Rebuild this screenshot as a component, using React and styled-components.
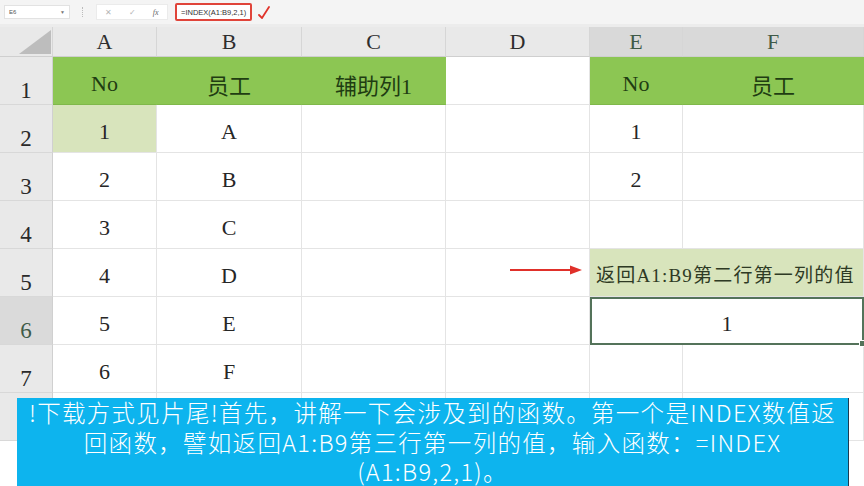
import React from "react";
import styled, { createGlobalStyle, css } from "styled-components";

const Global = createGlobalStyle`
  html, body { margin: 0; padding: 0; background: #fff; }
  #root { width: 864px; height: 486px; }
`;

const Screen = styled.div`
  position: relative;
  width: 864px;
  height: 486px;
  overflow: hidden;
  background: #fff;
  font-family: "Liberation Serif", "Noto Sans CJK SC", serif;
`;

const FormulaBar = styled.div`
  height: 24px;
  background: #f4f4f4;
  border-bottom: 3px solid #ececec;
  display: flex;
  align-items: center;
  padding: 0 4px;
  gap: 7px;
  font-family: "Liberation Sans", sans-serif;
`;

const NameBox = styled.div`
  width: 66px;
  height: 14px;
  background: #fff;
  border: 1px solid #e2e2e2;
  display: flex;
  align-items: center;
  justify-content: space-between;
  padding: 0 4px;
  box-sizing: border-box;
  font-size: 6px;
  color: #555;
`;

const Caret = styled.span`
  font-size: 5px;
  color: #777;
`;

const Dots = styled.span`
  width: 1px;
  height: 10px;
  margin: 0 5px;
  border-left: 1px dotted #bbb;
`;

const IconBox = styled.div`
  width: 72px;
  height: 16px;
  background: #fff;
  border: 1px solid #ebebeb;
  box-sizing: border-box;
  display: flex;
  align-items: center;
  justify-content: space-around;
  color: #b5b5b5;
  font-size: 8px;
`;

const Fx = styled.span`
  font-family: "Liberation Serif", serif;
  font-style: italic;
  color: #666;
  font-size: 8px;
`;

const FormulaInput = styled.div`
  height: 14px;
  padding: 0 4px;
  border: 2px solid #e0443a;
  border-radius: 2px;
  background: #fff;
  display: flex;
  align-items: center;
  font-size: 7.5px;
  color: #333;
`;

const Sheet = styled.div`
  display: grid;
  grid-template-columns: 53px 104px 145px 144px 144px 93px 181px;
  grid-template-rows: 30px repeat(8, 48px);
`;

const ColHead = styled.div`
  background: ${(p) => (p.$active ? "#d9d9d9" : "#e9e9e9")};
  border-right: 1px solid #d6d6d6;
  border-bottom: 1px solid #cfcfcf;
  display: flex;
  align-items: center;
  justify-content: center;
  font-size: 22px;
  color: ${(p) => (p.$active ? "#3e5a48" : "#2e2e2e")};
  box-sizing: border-box;
`;

const Corner = styled.div`
  background: #e9e9e9;
  border-right: 1px solid #d6d6d6;
  border-bottom: 1px solid #cfcfcf;
  position: relative;
  svg { position: absolute; right: 1px; bottom: 2px; }
`;

const RowHead = styled.div`
  background: ${(p) => (p.$active ? "#dadada" : "#e9e9e9")};
  border-right: 1px solid #d0d0d0;
  border-bottom: 1px solid #d8d8d8;
  display: flex;
  align-items: flex-end;
  justify-content: center;
  padding-bottom: 2px;
  box-sizing: border-box;
  font-size: 23px;
  line-height: 23px;
  color: ${(p) => (p.$active ? "#3e5a48" : "#2a2a2a")};
`;

const Cell = styled.div`
  box-sizing: border-box;
  border-right: 1px solid #e4e4e4;
  border-bottom: 1px solid #e4e4e4;
  display: flex;
  align-items: center;
  justify-content: ${(p) => (p.$left ? "flex-start" : "center")};
  padding-top: ${(p) => (p.$left ? "0" : "6px")};
  padding-left: ${(p) => (p.$left ? "6px" : "0")};
  font-size: 22px;
  color: #262626;
  white-space: nowrap;
  overflow: visible;
  background: ${(p) => p.$bg || "#fff"};
  ${(p) =>
    p.$span &&
    css`
      grid-column: span ${p.$span};
    `}
  ${(p) =>
    p.$bg === "#8cc653" &&
    css`
      border-right-color: #8cc653;
      border-bottom-color: #7fb84a;
      color: #1f3d12;
    `}
  ${(p) =>
    p.$selected &&
    css`
      border: 2px solid #54735a;
      position: relative;
    `}
  ${(p) =>
    p.$small &&
    css`
      font-size: 19px;
      letter-spacing: 1.2px;
      padding-top: 2px;
      color: #2e3a24;
    `}
`;

const Handle = styled.span`
  position: absolute;
  right: -4px;
  bottom: -4px;
  width: 5px;
  height: 5px;
  background: #54735a;
  border: 1px solid #fff;
`;

const Caption = styled.div`
  position: absolute;
  left: 17px;
  top: 398px;
  width: 832px;
  height: 100px;
  background: #0db4ee;
  border-right: 1px solid #1a3b52;
  box-sizing: border-box;
  color: #fff;
  font-family: "Noto Sans CJK SC", "Noto Sans", sans-serif;
  font-weight: 300;
  font-size: 23.5px;
  letter-spacing: 1.3px;
  line-height: 29.5px;
  text-align: center;
  padding: 0;
  white-space: nowrap;
`;

const Arrow = styled.svg`
  position: absolute;
  left: 508px;
  top: 263px;
`;

const Tick = styled.svg`
  margin-left: -2px;
`;

const GREEN = "#8cc653";
const PALE = "#d8e4bc";

const cols = ["A", "B", "C", "D", "E", "F"];

export default function App() {
  const data = [
    ["1", "A"],
    ["2", "B"],
    ["3", "C"],
    ["4", "D"],
    ["5", "E"],
    ["6", "F"],
    ["", ""],
  ];
  return (
    <Screen>
      <Global />
      <FormulaBar>
        <NameBox>
          E6<Caret>▼</Caret>
        </NameBox>
        <Dots />
        <IconBox>
          <span>✕</span>
          <span>✓</span>
          <Fx>fx</Fx>
        </IconBox>
        <FormulaInput>=INDEX(A1:B9,2,1)</FormulaInput>
        <Tick width="14" height="14" viewBox="0 0 14 14">
          <path d="M2 10 L5 13 L12 2" fill="none" stroke="#e0332a" strokeWidth="1.8" strokeLinecap="round" />
        </Tick>
      </FormulaBar>
      <Sheet>
        <Corner>
          <svg width="32" height="24" viewBox="0 0 32 24">
            <polygon points="32,0 32,24 0,24" fill="#bdbdbd" />
          </svg>
        </Corner>
        {cols.map((c) => (
          <ColHead key={c} $active={c === "E" || c === "F"}>
            {c}
          </ColHead>
        ))}

        <RowHead>1</RowHead>
        <Cell $bg={GREEN}>No</Cell>
        <Cell $bg={GREEN}>员工</Cell>
        <Cell $bg={GREEN}>辅助列1</Cell>
        <Cell />
        <Cell $bg={GREEN}>No</Cell>
        <Cell $bg={GREEN}>员工</Cell>

        {data.map((r, i) => {
          const row = i + 2;
          let right;
          if (row === 2 || row === 3) {
            right = (
              <>
                <Cell>{row - 1}</Cell>
                <Cell />
              </>
            );
          } else if (row === 5) {
            right = (
              <Cell $span={2} $bg={PALE} $left $small>
                返回A1:B9第二行第一列的值
              </Cell>
            );
          } else if (row === 6) {
            right = (
              <Cell $span={2} $selected>
                1<Handle />
              </Cell>
            );
          } else {
            right = (
              <>
                <Cell />
                <Cell />
              </>
            );
          }
          return (
            <React.Fragment key={row}>
              <RowHead $active={row === 6}>{row}</RowHead>
              <Cell $bg={row === 2 ? PALE : undefined}>{r[0]}</Cell>
              <Cell>{r[1]}</Cell>
              <Cell />
              <Cell />
              {right}
            </React.Fragment>
          );
        })}
      </Sheet>
      <Arrow width="76" height="14" viewBox="0 0 76 14">
        <line x1="2" y1="7" x2="64" y2="7" stroke="#e0302a" strokeWidth="2" />
        <polygon points="62,2.5 74,7 62,11.5" fill="#e0302a" />
      </Arrow>
      <Caption>
        !下载方式见片尾!首先，讲解一下会涉及到的函数。第一个是INDEX数值返
        <br />
        回函数，譬如返回A1:B9第三行第一列的值，输入函数：=INDEX
        <br />
        (A1:B9,2,1)。
      </Caption>
    </Screen>
  );
}
